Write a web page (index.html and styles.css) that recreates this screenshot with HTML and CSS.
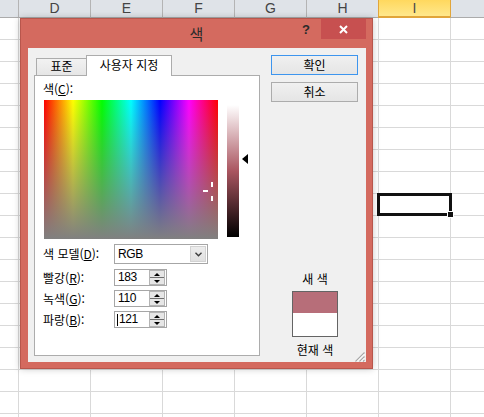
FILE: index.html
```html
<!DOCTYPE html>
<html lang="ko">
<head>
<meta charset="utf-8">
<title>색</title>
<link rel="stylesheet" href="styles.css">
</head>
<body>
<div class="sheet">
  <div class="col-headers">
    <div class="ch ch-partial"></div>
    <div class="ch">D</div>
    <div class="ch">E</div>
    <div class="ch">F</div>
    <div class="ch">G</div>
    <div class="ch">H</div>
    <div class="ch ch-active">I</div>
    <div class="ch ch-after"></div>
  </div>
  <div class="grid"></div>
  <div class="cell-selection"></div>
  <div class="fill-handle"></div>

  <div class="dialog">
    <div class="titlebar">
      <div></div>
      <div class="title">색</div>
      <div class="title-controls">
        <span class="help">?</span>
        <span class="close">
          <svg width="9" height="9" viewBox="0 0 9 9"><path d="M1 1 L8 8 M8 1 L1 8" stroke="#fff" stroke-width="2" fill="none"/></svg>
        </span>
      </div>
    </div>
    <div class="client">
      <div class="left">
        <div class="tabs">
          <div class="tab">표준</div>
          <div class="tab tab-selected">사용자 지정</div>
        </div>
        <div class="panel">
          <div class="lbl">색(<u>C</u>):</div>
          <div class="picker">
            <div class="spectrum">
              <span class="mark mark-left"></span>
              <span class="mark mark-top"></span>
              <span class="mark mark-bottom"></span>
            </div>
            <div class="lum"><span class="lum-arrow"></span></div>
          </div>
          <div class="form-row row-model">
            <span class="form-label">색 모델(<u>D</u>):</span>
            <div class="combo">
              <span class="field-text">RGB</span>
              <span class="combo-btn"><svg width="7" height="5" viewBox="0 0 7 5"><path d="M0.5 0.8 L3.5 3.8 L6.5 0.8" stroke="#3c3c3c" stroke-width="1.4" fill="none"/></svg></span>
            </div>
          </div>
          <div class="form-row row-spin">
            <span class="form-label">빨강(<u>R</u>):</span>
            <div class="spin">
              <span class="field-text">183</span>
              <span class="spin-btns"><span class="spin-up"><i class="tri-up"></i></span><span class="spin-down"><i class="tri-down"></i></span></span>
            </div>
          </div>
          <div class="form-row row-spin">
            <span class="form-label">녹색(<u>G</u>):</span>
            <div class="spin">
              <span class="field-text">110</span>
              <span class="spin-btns"><span class="spin-up"><i class="tri-up"></i></span><span class="spin-down"><i class="tri-down"></i></span></span>
            </div>
          </div>
          <div class="form-row row-spin">
            <span class="form-label">파랑(<u>B</u>):</span>
            <div class="spin">
              <span class="field-text field-caret"><span class="caret"></span>121</span>
              <span class="spin-btns"><span class="spin-up"><i class="tri-up"></i></span><span class="spin-down"><i class="tri-down"></i></span></span>
            </div>
          </div>
        </div>
      </div>
      <div class="right">
        <button class="btn btn-default">확인</button>
        <button class="btn btn-cancel">취소</button>
        <div class="preview-label">새 색</div>
        <div class="swatch"><div class="swatch-new"></div><div class="swatch-cur"></div></div>
        <div class="preview-label preview-cur">현재 색</div>
      </div>
      <svg class="grip" width="10" height="10" viewBox="0 0 10 10">
        <path d="M9.5 0.5 L0.5 9.5 M9.5 4.5 L4.5 9.5 M9.5 8 L8 9.5" stroke="#a8a8a8" stroke-width="1.2" fill="none"/>
        <path d="M9.5 2 L2 9.5 M9.5 6 L6 9.5" stroke="#ffffff" stroke-width="1" fill="none"/>
      </svg>
    </div>
  </div>
</div>
</body>
</html>
```
FILE: styles.css
```css
* { box-sizing: border-box; }
html, body { margin: 0; padding: 0; }
body {
  width: 484px;
  height: 417px;
  overflow: hidden;
  background: #fff;
  font-family: "Noto Sans CJK KR", "Liberation Sans", sans-serif;
  font-size: 12px;
  color: #000;
}
.sheet { position: relative; width: 484px; height: 417px; overflow: hidden; }

/* column headers */
.col-headers { display: flex; height: 18px; background: #dfe3e8; }
.ch {
  flex: 0 0 72px;
  height: 18px;
  border-left: 1px solid #b4b4b4;
  border-bottom: 1px solid #ababab;
  text-align: center;
  font-family: "Liberation Sans", sans-serif;
  font-size: 14px;
  line-height: 17px;
  color: #444;
}
.ch-partial { flex: 0 0 18px; border-left: 0; }
.ch-after { flex: 1 0 auto; }
.ch-active {
  background: linear-gradient(#ffd85e, #ffe88c);
  border-left-color: #e1a53a;
  border-bottom: 2px solid #e1a53a;
  color: #4a4a4a;
}
.ch-active + .ch { border-left-color: #e1a53a; }

.grid {
  height: 399px;
  background-image:
    linear-gradient(to bottom, transparent 21px, #d9d9d9 21px),
    linear-gradient(to right, #d9d9d9 1px, transparent 1px);
  background-size: 100% 22px, 72px 100%;
  background-position: 0 0, 18px 0;
}
.cell-selection {
  position: absolute;
  left: 377px;
  top: 193px;
  width: 75px;
  height: 23px;
  border: 3px solid #111;
}
.fill-handle {
  position: absolute;
  left: 448px;
  top: 212px;
  width: 5px;
  height: 5px;
  background: #111;
  box-shadow: 0 0 0 1px #fff;
}

/* dialog */
.dialog {
  position: absolute;
  left: 20px;
  top: 18px;
  width: 353px;
  height: 351px;
  background: #d46a5f;
  border: 1px solid #b8564c;
  box-shadow: 0 0 7px rgba(0, 0, 0, 0.22);
  display: flex;
  flex-direction: column;
  padding: 0 6px 6px 7px;
}
.titlebar {
  height: 29px;
  margin: 0 -6px 0 -7px;
  display: grid;
  grid-template-columns: 1fr auto 1fr;
  align-items: start;
}
.title {
  font-size: 15px;
  line-height: 29px;
  color: #2b2b2b;
}
.title-controls {
  justify-self: end;
  display: flex;
  align-items: flex-start;
  margin-right: 6px;
}
.help {
  font-family: "Liberation Sans", sans-serif;
  font-weight: bold;
  font-size: 13px;
  line-height: 21px;
  color: #2a2a2a;
  margin-right: 11px;
}
.close {
  width: 45px;
  height: 20px;
  background: #c75050;
  display: flex;
  align-items: center;
  justify-content: center;
}

.client {
  flex: 1;
  position: relative;
  background: #f0f0f0;
  display: flex;
  align-items: flex-start;
  padding: 7px 0 0 6px;
}
.left { width: 226px; }
.tabs {
  position: relative;
  z-index: 1;
  height: 20px;
  display: flex;
  align-items: flex-end;
  padding-left: 2px;
}
.tab {
  width: 51px;
  height: 17px;
  border: 1px solid #acacac;
  border-bottom: 0;
  background: linear-gradient(#f2f2f2, #e6e6e6);
  text-align: center;
  line-height: 14px;
}
.tab-selected {
  width: 86px;
  height: 21px;
  margin-left: -1px;
  margin-bottom: -1px;
  background: #fff;
  line-height: 18px;
}
.panel {
  height: 281px;
  border: 1px solid #acacac;
  background: #fff;
  padding: 6px 0 0 8px;
}
.lbl { line-height: 14px; height: 14px; }
u { text-decoration: underline; text-underline-offset: 1px; }

.picker {
  display: flex;
  align-items: flex-start;
  margin: 4px 0 0 1px;
}
.spectrum {
  position: relative;
  overflow: hidden;
  width: 174px;
  height: 139px;
  background-image:
    linear-gradient(to bottom, rgba(128,128,128,0), #808080),
    linear-gradient(to right, #f00, #ff0, #0f0, #0ff, #00f, #f0f, #f00);
}
.mark { position: absolute; background: #fff; }
.mark-left { left: 159px; top: 90px; width: 5px; height: 2px; }
.mark-top { left: 167px; top: 82px; width: 2px; height: 5px; }
.mark-bottom { left: 167px; top: 96px; width: 2px; height: 5px; }
.lum {
  position: relative;
  width: 12px;
  height: 132px;
  margin: 5px 0 0 9px;
  background: linear-gradient(to bottom, #fff, rgb(170, 85, 96) 50%, #000);
}
.lum-arrow {
  position: absolute;
  left: 15px;
  top: 49px;
  width: 0;
  height: 0;
  border-right: 6px solid #000;
  border-top: 5px solid transparent;
  border-bottom: 5px solid transparent;
}

.form-row { display: flex; align-items: center; }
.row-model { height: 20px; margin-top: 5px; }
.row-spin { height: 17px; margin-top: 4px; }
.row-model + .row-spin { margin-top: 5px; }
.form-label { width: 71px; line-height: 14px; }
.field-text {
  flex: 1;
  font-family: "Liberation Sans", sans-serif;
  font-size: 12px;
  letter-spacing: -0.4px;
  padding-left: 3px;
  display: flex;
  align-items: center;
}
.combo {
  width: 94px;
  height: 20px;
  border: 1px solid #a6a6a6;
  background: #fff;
  display: flex;
}
.combo .field-text { line-height: 18px; }
.combo-btn {
  width: 16px;
  margin: 1px 1px 1px 0;
  background: linear-gradient(#ececec, #e0e0e0);
  border: 1px solid #d2d2d2;
  display: flex;
  align-items: center;
  justify-content: center;
}
.spin {
  width: 53px;
  height: 17px;
  border: 1px solid #a6a6a6;
  background: #fff;
  display: flex;
}
.spin .field-text { line-height: 15px; }
.field-caret { padding-left: 2px; }
.caret { display: inline-block; width: 1px; height: 12px; background: #000; margin-right: 1px; }
.spin-btns {
  width: 16px;
  margin-right: 1px;
  border: 1px solid #b4b4b4;
  display: flex;
  flex-direction: column;
  background: #e6e6e6;
}
.spin-up, .spin-down {
  flex: 1;
  display: flex;
  align-items: center;
  justify-content: center;
}
.spin-up { border-bottom: 1px solid #6e6e6e; }
.tri-up, .tri-down {
  display: block;
  width: 0;
  height: 0;
  border-left: 3px solid transparent;
  border-right: 3px solid transparent;
}
.tri-up { border-bottom: 3px solid #000; }
.tri-down { border-top: 3px solid #000; }

/* right column */
.right {
  width: 87px;
  margin-left: 11px;
  display: flex;
  flex-direction: column;
  align-items: center;
}
.btn {
  width: 87px;
  height: 20px;
  padding: 0;
  margin: 0;
  border: 1px solid #acacac;
  background: linear-gradient(#f0f0f0, #e5e5e5);
  font-family: "Noto Sans CJK KR", sans-serif;
  font-size: 12px;
  line-height: 16px;
  color: #000;
}
.btn-default { border-color: #3d95ee; }
.btn-cancel { margin-top: 7px; }
.preview-label { margin-top: 170px; line-height: 14px; padding-left: 1px; }
.swatch {
  width: 46px;
  height: 46px;
  margin-top: 5px;
  border: 1px solid #646464;
  display: flex;
  flex-direction: column;
}
.swatch-new { height: 21px; background: #b76e79; }
.swatch-cur { flex: 1; background: #fff; }
.preview-cur { margin-top: 6px; }

.grip { position: absolute; right: 1px; bottom: 0; }
```
